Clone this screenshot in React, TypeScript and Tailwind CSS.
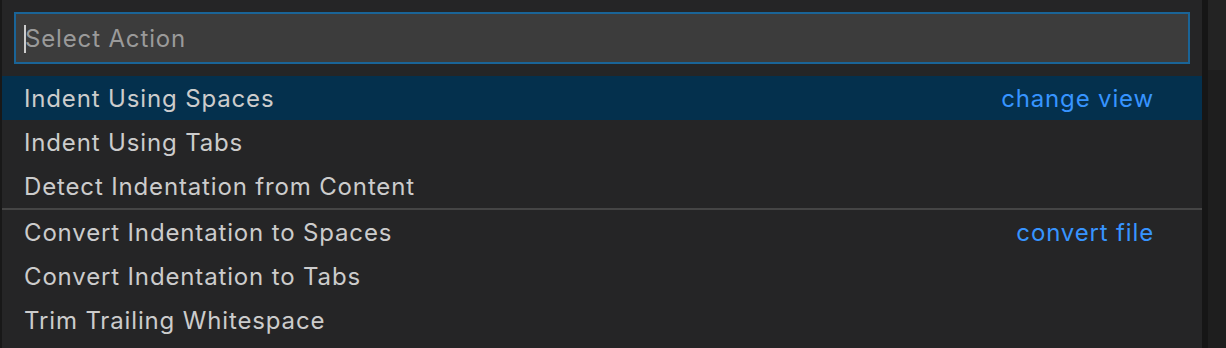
import React from "react";

type Row = { label: string; hint?: string; active?: boolean };

const group1: Row[] = [
  { label: "Indent Using Spaces", hint: "change view", active: true },
  { label: "Indent Using Tabs" },
  { label: "Detect Indentation from Content" },
];
const group2: Row[] = [
  { label: "Convert Indentation to Spaces", hint: "convert file" },
  { label: "Convert Indentation to Tabs" },
  { label: "Trim Trailing Whitespace" },
];

function Item({ row }: { row: Row }) {
  return (
    <div
      className={`flex items-center justify-between h-[44px] pl-[22px] pr-[48px] pt-[2px] ${
        row.active ? "bg-[#04304d]" : ""
      }`}
    >
      <span className="text-[#cccccc]">{row.label}</span>
      {row.hint && <span className="text-[#3794ff]">{row.hint}</span>}
    </div>
  );
}

export default function App() {
  return (
    <div
      className="flex w-[1226px] h-[348px] bg-[#1e1e1e] overflow-hidden text-[24px] leading-none tracking-[0.85px]"
      style={{ fontFamily: "Inter, 'Noto Sans', sans-serif" }}
    >
      <div className="w-[2px] bg-[#181818]" />
      <div className="w-[1200px] bg-[#252526] flex flex-col pt-[12px]">
        <div className="mx-[12px] h-[52px] bg-[#3c3c3c] border-2 border-[#1a6497] flex items-center pl-[8px] pt-[2px]">
          <span className="w-[2px] h-[28px] bg-[#cccccc] mr-[-1px]" />
          <span className="text-[#9a9a9a]">Select Action</span>
        </div>
        <div className="mt-[12px]">
          {group1.map((r) => (
            <Item key={r.label} row={r} />
          ))}
          <div className="h-[2px] bg-[#454545]" />
          {group2.map((r) => (
            <Item key={r.label} row={r} />
          ))}
        </div>
      </div>
      <div className="w-[6px] bg-[#161616]" />
      <div className="flex-1 flex flex-col">
        <div className="h-[70px] bg-[#232323]" />
        <div className="flex-1 bg-[#1e1e1e]" />
      </div>
    </div>
  );
}
